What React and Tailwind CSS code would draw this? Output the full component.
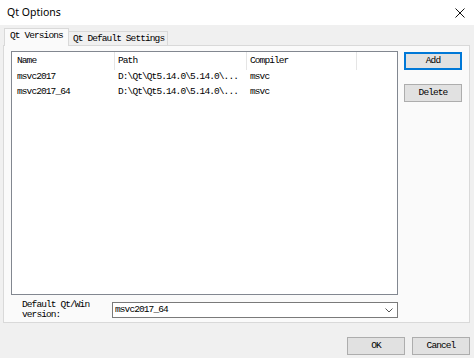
import { useState } from "react";

const mono = { fontFamily: '"Liberation Mono", "DejaVu Sans Mono", monospace' };

const versions = [
  { name: "msvc2017", path: "D:\\Qt\\Qt5.14.0\\5.14.0\\...", compiler: "msvc" },
  { name: "msvc2017_64", path: "D:\\Qt\\Qt5.14.0\\5.14.0\\...", compiler: "msvc" },
];

function Button({ children, focused }) {
  return (
    <button
      className={
        "w-[58px] h-[18px] flex items-center justify-center bg-[#e1e1e1] text-[9.5px] tracking-[-0.9px] text-black " +
        (focused ? "border-2 border-[#0078d7]" : "border border-[#adadad]")
      }
      style={mono}
    >
      {children}
    </button>
  );
}

export default function App() {
  const [tab, setTab] = useState(0);

  return (
    <div className="w-[474px] h-[358px] bg-[#f0f0f0] flex flex-col overflow-hidden">
      <div className="h-[25px] bg-white flex items-center justify-between pl-[7px] pr-[9px] shrink-0">
        <span
          className="text-[10.5px] text-black"
          style={{ fontFamily: '"Noto Sans", "Open Sans", sans-serif' }}
        >
          Qt Options
        </span>
        <svg width="10" height="10" viewBox="0 0 10 10">
          <path d="M0.5 0.5 L9.5 9.5 M9.5 0.5 L0.5 9.5" stroke="#111" strokeWidth="1" />
        </svg>
      </div>

      <div className="pt-[2px] pl-[3px]" style={mono}>
        <div className="flex items-end h-[18px] pl-[1px] text-[9.5px] tracking-[-0.9px] text-black">
          <button
            onClick={() => setTab(0)}
            className="relative z-10 h-[18px] w-[65px] border border-b-0 border-[#d9d9d9] bg-[#fafafa] pl-[5px] text-left -mb-px pb-[3px]"
          >
            Qt Versions
          </button>
          <button
            onClick={() => setTab(1)}
            className="h-[14px] w-[99px] border border-l-0 border-b-0 border-[#d9d9d9] bg-[#f0f0f0] pl-[4px] text-left"
          >
            Qt Default Settings
          </button>
        </div>

        <div className="w-[467px] h-[278px] border border-[#d9d9d9] bg-[#fafafa] flex pl-[7px] pt-[5px] gap-[6px]">
          <div className="flex flex-col w-[387px]">
            <div className="h-[244px] border border-[#828790] bg-white text-[9.5px] tracking-[-0.9px] text-black">
              <div className="flex h-[18px] items-center">
                <div className="w-[103px] h-full flex items-center pl-[5px] border-r border-[#e5e5e5]">Name</div>
                <div className="w-[132px] h-full flex items-center pl-[3px] border-r border-[#e5e5e5]">Path</div>
                <div className="w-[110px] h-full flex items-center pl-[3px] border-r border-[#e5e5e5]">Compiler</div>
              </div>
              {versions.map((v) => (
                <div key={v.name} className="flex h-[15px] items-center">
                  <div className="w-[103px] pl-[5px]">{v.name}</div>
                  <div className="w-[132px] pl-[3px]">{v.path}</div>
                  <div className="w-[110px] pl-[3px]">{v.compiler}</div>
                </div>
              ))}
            </div>

            <div className="flex items-center mt-[5px] text-[9.5px] tracking-[-0.9px] text-black">
              <div className="w-[101px] pl-[11px] leading-[10px]">
                Default Qt/Win
                <br />
                version:
              </div>
              <div className="w-[286px] h-[16px] border border-[#7a7a7a] bg-white flex items-center justify-between pl-[2px] pr-[4px]">
                <span>msvc2017_64</span>
                <svg width="8" height="5" viewBox="0 0 8 5">
                  <path d="M0.5 0.5 L4 4 L7.5 0.5" fill="none" stroke="#555" strokeWidth="1" />
                </svg>
              </div>
            </div>
          </div>

          <div className="flex flex-col gap-[14px] pt-px">
            <Button focused>Add</Button>
            <Button>Delete</Button>
          </div>
        </div>
      </div>

      <div className="flex justify-end gap-[7px] pr-[4px] mt-[14px]">
        <Button>OK</Button>
        <Button>Cancel</Button>
      </div>
    </div>
  );
}
